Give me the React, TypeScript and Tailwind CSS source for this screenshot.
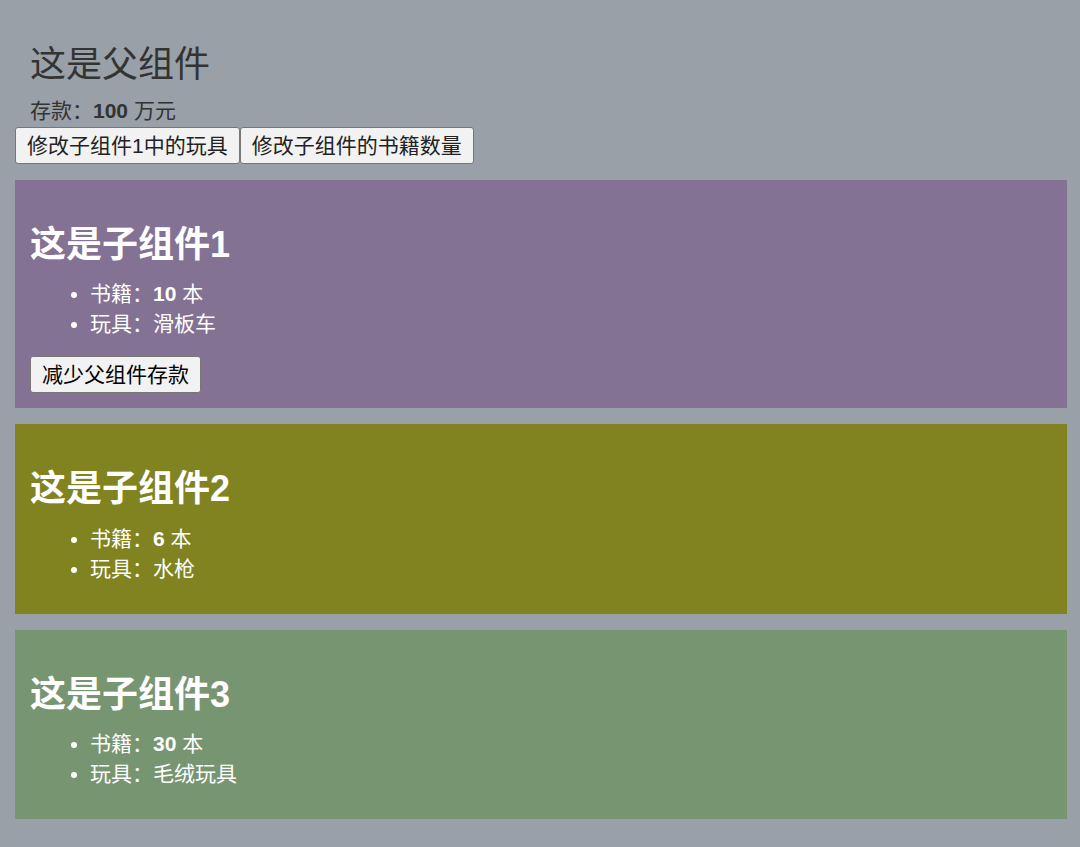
import React, { useState } from "react";

const font = "font-['Liberation_Sans','Noto_Sans_CJK_SC',sans-serif]";

interface Kid {
  title: string;
  books: number;
  toy: string;
  bg: string;
  showButton?: boolean;
}

function Child({ kid, onSpend }: { kid: Kid; onSpend?: () => void }) {
  return (
    <div className={`${kid.bg} px-[15px] pt-[15px] pb-[15px] mt-[16px] text-white`}>
      <h3 className="mt-[30px] mb-[15px] text-[36px] leading-[1.1] font-bold">
        {kid.title}
      </h3>
      <ul className="list-disc pl-[60px] mb-[15px] text-[21px] leading-[30px]">
        <li>
          书籍：<strong>{kid.books}</strong> 本
        </li>
        <li>玩具：{kid.toy}</li>
      </ul>
      {kid.showButton && (
        <button
          type="button"
          onClick={onSpend}
          className="box-border block mt-[17px] h-[37px] px-[11px] text-[21px] leading-none text-black bg-[#f2f2f2] border border-[#767676] rounded-[3px]"
        >
          减少父组件存款
        </button>
      )}
    </div>
  );
}

export default function App() {
  const [money, setMoney] = useState(100);
  const [toy, setToy] = useState("滑板车");
  const [extra, setExtra] = useState(0);

  const kids: Kid[] = [
    { title: "这是子组件1", books: 10 + extra, toy, bg: "bg-[#837294]", showButton: true },
    { title: "这是子组件2", books: 6 + extra, toy: "水枪", bg: "bg-[#80831f]" },
    { title: "这是子组件3", books: 30 + extra, toy: "毛绒玩具", bg: "bg-[#789572]" },
  ];

  return (
    <div className={`${font} min-h-[847px] bg-[#99a0a7] pt-[15px] pl-[15px] pr-[13px] pb-[15px] text-[#333]`}>
      <div className="px-[15px]">
        <h3 className="mt-[30px] mb-[15px] text-[36px] leading-[1.1] font-normal">
          这是父组件
        </h3>
        <p className="text-[21px] leading-[30px] -mt-[4px]">
          存款：<strong>{money}</strong> 万元
        </p>
      </div>
      <div className="flex mt-[1px]">
        <button
          type="button"
          onClick={() => setToy("小火车")}
          className="box-border h-[37px] px-[11px] text-[21px] leading-none text-[#222] bg-[#f2f2f2] border border-[#767676] rounded-[3px]"
        >
          修改子组件1中的玩具
        </button>
        <button
          type="button"
          onClick={() => setExtra(extra + 1)}
          className="box-border h-[37px] px-[11px] text-[21px] leading-none text-[#222] bg-[#f2f2f2] border border-[#767676] rounded-[3px]"
        >
          修改子组件的书籍数量
        </button>
      </div>
      {kids.map((k) => (
        <Child key={k.title} kid={k} onSpend={() => setMoney(money - 1)} />
      ))}
    </div>
  );
}
